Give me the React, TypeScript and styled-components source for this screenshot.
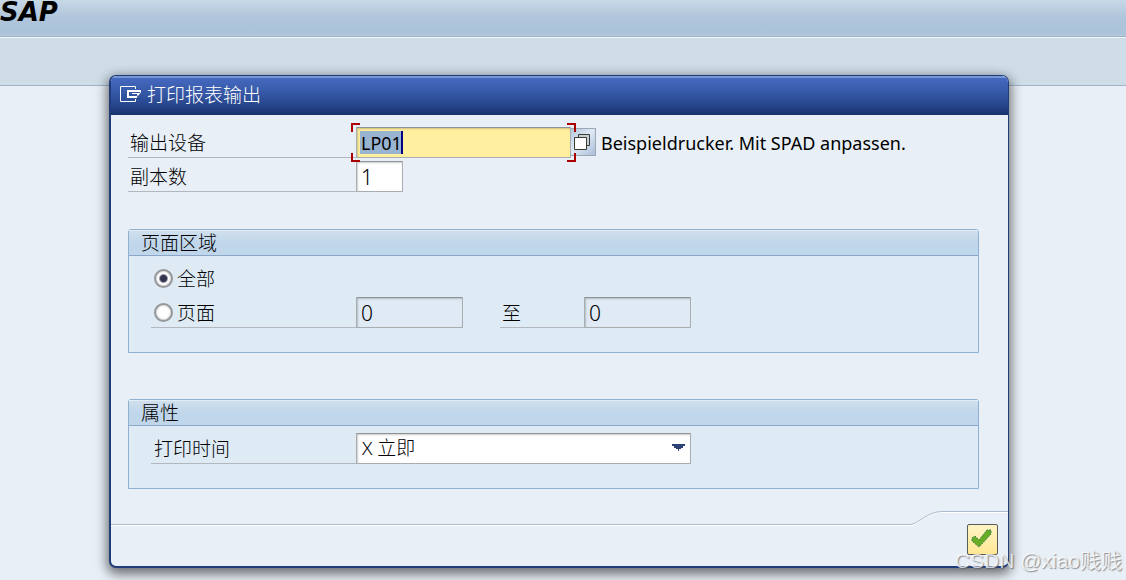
import React from "react";
import styled, { createGlobalStyle } from "styled-components";

const latin = `"Noto Sans", "Noto Sans CJK SC", sans-serif`;
const chinese = `"Noto Sans CJK SC", sans-serif`;

const GlobalStyle = createGlobalStyle`
  *, *::before, *::after { box-sizing: border-box; }
  body { margin: 0; background: #e8eff6; }
`;

const Page = styled.div`
  position: relative;
  min-height: 100vh;
  overflow: hidden;
  background: #e8eff6;
  color: #000;
  font: 300 19px/24px ${chinese};
`;

const TopBar = styled.header`
  height: 37px;
  border-bottom: 1px solid #9fb3c6;
  background: linear-gradient(#c8d8e6 0, #afc5db 18px, #abc3db 34px, #b9cddf 36px);
`;

const Brand = styled.span`
  display: block;
  font: italic 700 26px/24px "DejaVu Sans", sans-serif;
`;

const ToolBar = styled.div`
  height: 49px;
  border-top: 1px solid #f2f7fa;
  border-bottom: 1px solid #9fb5c6;
  background: #cfdde8;
`;

const Overlay = styled.div`
  position: absolute;
  top: 75px;
  left: 0;
  right: 0;
  padding: 0 117px 0 109px;
`;

const Dialog = styled.section`
  overflow: hidden;
  border: solid #213c78;
  border-width: 1px 1px 2px 2px;
  border-radius: 7px;
  background: #e8eff6;
  box-shadow: 0 4px 12px 2px rgba(0, 0, 0, 0.55);
`;

const TitleBar = styled.header`
  display: flex;
  align-items: center;
  gap: 5px;
  height: 39px;
  padding: 0 8px 5px;
  border-top: 2px solid #7496d4;
  background: linear-gradient(#4569c0 0, #385aa9 13px, #25458c 28px, #19336f 36px);
  color: #fff;
`;

const Title = styled.h1`
  margin: 0;
  font: inherit;
`;

const Body = styled.form`
  padding: 12px 29px 0 17px;
`;

const Row = styled.div`
  display: flex;
  height: 31px;
  & + & { margin-top: 3px; }
`;

const Label = styled.label<{ $width: number; $indent?: number }>`
  flex: none;
  width: ${(p) => p.$width}px;
  padding: 3px 0 0 ${(p) => p.$indent ?? 2}px;
  border-bottom: 1px solid #b2b8bd;
`;

const Field = styled.input<{ $width: number }>`
  flex: none;
  width: ${(p) => p.$width}px;
  height: 31px;
  padding: 0 4px;
  border: 1px solid #aaadb0;
  border-top-color: #8f9396;
  border-radius: 1px;
  outline: none;
  background: #fff;
  box-shadow: inset 1px 1px 2px rgba(0, 0, 0, 0.2);
  color: #000;
  font: 300 21px/24px ${latin};
  &:disabled { background: #dfeaf4; opacity: 1; }
`;

const FocusFrame = styled.div`
  position: relative;
  display: flex;
`;

const ActiveField = styled(Field)`
  font-size: 18px;
  font-weight: 400;
  background:
    linear-gradient(#000080, #000080) 44px 3px / 2px 23px no-repeat,
    linear-gradient(#99b4d1, #99b4d1) 3px 3px / 41px 23px no-repeat,
    #ffef9f;
`;

const Corner = styled.i<{ $right?: boolean; $bottom?: boolean }>`
  position: absolute;
  z-index: 1;
  width: 9px;
  height: 9px;
  border: 0 solid #aa0000;
  ${(p) => (p.$right ? "right: -5px; border-right-width: 2px;" : "left: -5px; border-left-width: 2px;")}
  ${(p) => (p.$bottom ? "bottom: -4px; border-bottom-width: 2px;" : "top: -4px; border-top-width: 2px;")}
`;

const LookupButton = styled.button`
  display: grid;
  place-items: center;
  width: 25px;
  height: 28px;
  margin-top: 1px;
  padding: 0 2px 0 0;
  border: 1px solid #9da7b5;
  border-left: 0;
  background: linear-gradient(135deg, #b3c5de, #dfe9f5 45%, #aabedb);
`;

const Note = styled.span`
  padding: 4px 0 0 5px;
  font: 400 18px/24px ${latin};
  white-space: nowrap;
`;

const Group = styled.fieldset<{ $gap: number }>`
  margin: ${(p) => p.$gap}px 0 0;
  padding: 0;
  min-width: 0;
  border: 1px solid #8fb0d0;
  border-radius: 3px 3px 0 0;
  background: #deeaf4;
`;

const GroupTitle = styled.legend`
  float: left;
  width: 100%;
  height: 26px;
  padding: 0 12px;
  border-bottom: 1px solid #8ca6c8;
  line-height: 22px;
  border-top: 1px solid #e3edf6;
  background: linear-gradient(#cfdfee, #c0d6ea 12px);
`;

const GroupBody = styled.div`
  clear: both;
  padding: 7px 22px 24px;
`;

const RadioLabel = styled.label<{ $line?: boolean }>`
  display: flex;
  align-items: center;
  gap: 4px;
  flex: none;
  width: 205px;
  padding-left: 3px;
  border-bottom: 1px solid ${(p) => (p.$line ? "#b2b8bd" : "transparent")};
`;

const Radio = styled.input`
  appearance: none;
  width: 19px;
  height: 19px;
  margin: 0;
  border: 2px solid #96999c;
  border-radius: 50%;
  background: #fff;
  box-shadow: inset 0 0 2px rgba(0, 0, 0, 0.4);
  &:checked { background: radial-gradient(circle, #34344e 3px, #fff 5px); }
`;

const SelectWrap = styled.div`
  position: relative;
`;

const Select = styled.select`
  appearance: none;
  display: block;
  width: 335px;
  height: 31px;
  padding: 0 24px 2px 5px;
  border: 1px solid #aaadb0;
  border-top-color: #8f9396;
  border-radius: 1px;
  background: #fff;
  box-shadow: inset 1px 1px 2px rgba(0, 0, 0, 0.2);
  color: #000;
  font: 300 19px/24px ${latin};
`;

const Arrow = styled.svg`
  position: absolute;
  top: 10px;
  right: 6px;
  pointer-events: none;
`;

const Spacer = styled.span`
  width: 37px;
`;

const Footer = styled.footer`
  margin-top: 22px;
`;

const Divider = styled.div`
  display: flex;
  height: 13px;
`;

const LowLine = styled.span`
  flex: 1;
  margin-top: 13px;
  border-top: 1px solid #adbbcb;
  box-shadow: 0 1px #fff;
`;

const HighLine = styled.span`
  width: 66px;
  border-top: 1px solid #adbbcb;
  box-shadow: inset 0 1px #fff;
`;

const Actions = styled.div`
  display: flex;
  justify-content: flex-end;
  padding: 0 10px 11px;
`;

const ConfirmButton = styled.button`
  display: grid;
  place-items: center;
  width: 31px;
  height: 31px;
  padding: 0 3px 2px 0;
  border: 1px solid #595c54;
  border-radius: 2px;
  background: linear-gradient(#fff4c4, #ffe794);
`;

const Watermark = styled.span`
  position: absolute;
  right: 4px;
  bottom: 7px;
  color: rgba(255, 255, 255, 0.75);
  font: 21px/24px "Liberation Sans", ${chinese};
  text-shadow: 1px 1px 1px rgba(90, 90, 90, 0.65);
`;

export default function App() {
  return (
    <Page>
      <GlobalStyle />
      <TopBar>
        <Brand>SAP</Brand>
      </TopBar>
      <ToolBar />
      <Overlay>
        <Dialog role="dialog" aria-labelledby="dialog-title">
          <TitleBar>
            <svg width="23" height="18" viewBox="0 0 23 18" fill="none" stroke="#fff" aria-hidden="true">
              <path d="M16.5 4V1.5H1.5v15h15V14" />
              <path d="M22 6H9v6h9" strokeWidth="2" />
              <path d="M21.5 6.500v1L18 11.500M13 8.500h7M18 9.500h2" />
            </svg>
            <Title id="dialog-title">打印报表输出</Title>
          </TitleBar>
          <Body onSubmit={(e) => e.preventDefault()} id="print-form">
            <Row>
              <Label $width={228} htmlFor="device">输出设备</Label>
              <FocusFrame>
                <ActiveField $width={215} id="device" defaultValue="LP01" />
                <Corner />
                <Corner $right />
                <Corner $bottom />
                <Corner $right $bottom />
              </FocusFrame>
              <LookupButton type="button" aria-label="输出设备">
                <svg width="18" height="18" viewBox="0 0 18 18" stroke="#39392f" aria-hidden="true">
                  <path d="M5.5 1.5h11v11h-11z" fill="#c5d0d8" />
                  <path d="M1.5 4.5h12v12h-12z" fill="#fff" />
                </svg>
              </LookupButton>
              <Note>Beispieldrucker. Mit SPAD anpassen.</Note>
            </Row>
            <Row>
              <Label $width={228} htmlFor="copies">副本数</Label>
              <Field $width={47} id="copies" defaultValue="1" />
            </Row>
            <Group $gap={37}>
              <GroupTitle>页面区域</GroupTitle>
              <GroupBody>
                <Row>
                  <RadioLabel>
                    <Radio type="radio" name="range" defaultChecked />
                    全部
                  </RadioLabel>
                </Row>
                <Row>
                  <RadioLabel $line>
                    <Radio type="radio" name="range" />
                    页面
                  </RadioLabel>
                  <Field $width={107} disabled defaultValue="0" aria-label="页面" />
                  <Spacer />
                  <Label $width={84} htmlFor="page-to">至</Label>
                  <Field $width={107} id="page-to" disabled defaultValue="0" />
                </Row>
              </GroupBody>
            </Group>
            <Group $gap={46}>
              <GroupTitle>属性</GroupTitle>
              <GroupBody>
                <Row>
                  <Label $width={205} $indent={3} htmlFor="time">打印时间</Label>
                  <SelectWrap>
                    <Select id="time">
                      <option>X 立即</option>
                    </Select>
                    <Arrow width="13" height="9" viewBox="0 0 13 9" aria-hidden="true">
                      <path d="M0 1h13v2h-2v2H9v1H7v2H6V6H4V5H2V3H0z" fill="#2b4174" />
                    </Arrow>
                  </SelectWrap>
                </Row>
              </GroupBody>
            </Group>
          </Body>
          <Footer>
            <Divider>
              <LowLine />
              <svg width="32" height="15" viewBox="0 0 32 15" fill="none" aria-hidden="true">
                <path d="M0 14.500C8 14.500 17 1.500 32 1.500" stroke="#fff" />
                <path d="M0 13.500C8 13.500 17 .5 32 .5" stroke="#adbbcb" />
              </svg>
              <HighLine />
            </Divider>
            <Actions>
              <ConfirmButton type="submit" form="print-form" aria-label="确认">
                <svg width="21" height="19" viewBox="0 0 21 19" aria-hidden="true">
                  <path d="M1 9l3-2 4 4L16 1h4v4L8 18 1 12z" fill="#66ad24" stroke="#3f7d55" strokeDasharray="2 1" />
                </svg>
              </ConfirmButton>
            </Actions>
          </Footer>
        </Dialog>
      </Overlay>
      <Watermark>CSDN @xiao贱贱</Watermark>
    </Page>
  );
}
